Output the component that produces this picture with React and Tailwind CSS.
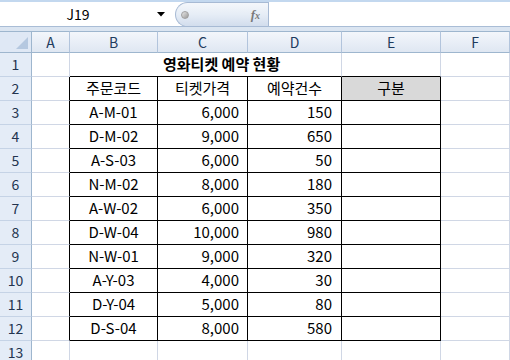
import React from "react";

const data = [
  ["A-M-01", "6,000", "150"],
  ["D-M-02", "9,000", "650"],
  ["A-S-03", "6,000", "50"],
  ["N-M-02", "8,000", "180"],
  ["A-W-02", "6,000", "350"],
  ["D-W-04", "10,000", "980"],
  ["N-W-01", "9,000", "320"],
  ["A-Y-03", "4,000", "30"],
  ["D-Y-04", "5,000", "80"],
  ["D-S-04", "8,000", "580"],
];

const cols = ["A", "B", "C", "D", "E", "F"];

function Cell({ r, c, children, className = "" }) {
  // c: 0=A .. 5=F
  const inTable = r >= 2 && r <= 12;
  const rightBlack = inTable && c >= 0 && c <= 4;
  const bottomBlack = (inTable && c >= 1 && c <= 4) || (r === 1 && c >= 1 && c <= 4);
  return (
    <div
      className={
        "h-[24px] flex items-center border-r border-b overflow-hidden whitespace-nowrap " +
        (rightBlack ? "border-r-black " : "border-r-[#d0d7e5] ") +
        (bottomBlack ? "border-b-black " : "border-b-[#d0d7e5] ") +
        className
      }
    >
      {children}
    </div>
  );
}

function RowHead({ n }) {
  return (
    <div className="h-[24px] flex items-center justify-center bg-[#e4ecf7] border-r border-r-[#9eb6ce] border-b border-b-[#c5d3e6] text-[14px] text-[#23344f]">
      {n}
    </div>
  );
}

export default function App() {
  return (
    <div
      className="w-[510px] h-[360px] overflow-hidden bg-white text-black"
      style={{ fontFamily: '"Noto Sans CJK KR", "Noto Sans", sans-serif' }}
    >
      {/* formula bar */}
      <div className="h-[31px] flex flex-col bg-[#dbe5f1]">
        <div className="h-[2px] bg-[#c3d8ef]" />
        <div className="h-[25px] flex bg-white border-b border-b-[#a9bdd6]">
          <div className="w-[156px] flex items-center justify-center text-[14px] text-black">J19</div>
          <div className="w-[19px] flex items-center justify-start pl-[1px]">
            <svg width="8" height="5" viewBox="0 0 8 5">
              <path d="M0 0 H8 L4 4.5 Z" fill="#000" />
            </svg>
          </div>
          <div className="w-[93px] h-[25px] flex items-center rounded-l-full border border-r-0 border-[#a7bad4] bg-gradient-to-b from-[#f4f7fb] via-[#e6edf6] to-[#d2dded] relative">
            <div className="ml-[5px] w-[8px] h-[8px] rounded-full bg-gradient-to-br from-[#e8e8e8] to-[#9a9a9a] border border-[#a0a0a0]" />
            <span
              className="ml-auto mr-[8px] text-[13px] italic font-bold text-[#7a7a7a]"
              style={{ fontFamily: '"Liberation Serif", serif' }}
            >
              f<span className="text-[10px]">x</span>
            </span>
          </div>
          <div className="flex-1 border-l border-[#a7bad4] bg-white" />
        </div>
        <div className="flex-1" />
      </div>

      {/* grid */}
      <div className="grid grid-cols-[32px_38px_88px_90px_94px_99px_69px]">
        {/* header row */}
        <div className="h-[22px] border-t border-t-[#9eb6ce] border-r border-r-[#9eb6ce] border-b border-b-[#9eb6ce] bg-[#dfe8f5] relative">
          <svg className="absolute right-[3px] bottom-[3px]" width="12" height="12" viewBox="0 0 12 12">
            <path d="M12 0 V12 H0 Z" fill="#b5c8e0" />
          </svg>
        </div>
        {cols.map((c) => (
          <div
            key={c}
            className="h-[22px] flex items-center justify-center border-t border-t-[#9eb6ce] border-r border-r-[#b2c4dc] border-b border-b-[#9eb6ce] bg-gradient-to-b from-[#f3f6fb] to-[#dfe7f2] text-[14px] text-[#1f3b5e]"
          >
            {c}
          </div>
        ))}

        {/* row 1 */}
        <RowHead n={1} />
        <Cell r={1} c={0} />
        <div className="col-span-3 h-[24px] flex items-center pl-[93px] border-r border-r-[#d0d7e5] border-b border-b-black text-[15px] font-bold whitespace-nowrap">
          영화티켓 예약 현황
        </div>
        <Cell r={1} c={4} />
        <Cell r={1} c={5} />

        {/* row 2 */}
        <RowHead n={2} />
        <Cell r={2} c={0} />
        <Cell r={2} c={1} className="justify-center text-[15px]">주문코드</Cell>
        <Cell r={2} c={2} className="justify-center text-[15px]">티켓가격</Cell>
        <Cell r={2} c={3} className="justify-center text-[15px]">예약건수</Cell>
        <Cell r={2} c={4} className="justify-center text-[15px] bg-[#d9d9d9]">구분</Cell>
        <Cell r={2} c={5} />

        {data.map((row, i) => {
          const r = i + 3;
          return (
            <React.Fragment key={r}>
              <RowHead n={r} />
              <Cell r={r} c={0} />
              <Cell r={r} c={1} className="justify-center text-[15px]">{row[0]}</Cell>
              <Cell r={r} c={2} className="justify-end pr-[8px] text-[15px]">{row[1]}</Cell>
              <Cell r={r} c={3} className="justify-end pr-[9px] text-[15px]">{row[2]}</Cell>
              <Cell r={r} c={4} />
              <Cell r={r} c={5} />
            </React.Fragment>
          );
        })}

        {/* row 13 */}
        <RowHead n={13} />
        <Cell r={13} c={0} />
        <Cell r={13} c={1} />
        <Cell r={13} c={2} />
        <Cell r={13} c={3} />
        <Cell r={13} c={4} />
        <Cell r={13} c={5} />
      </div>
    </div>
  );
}
